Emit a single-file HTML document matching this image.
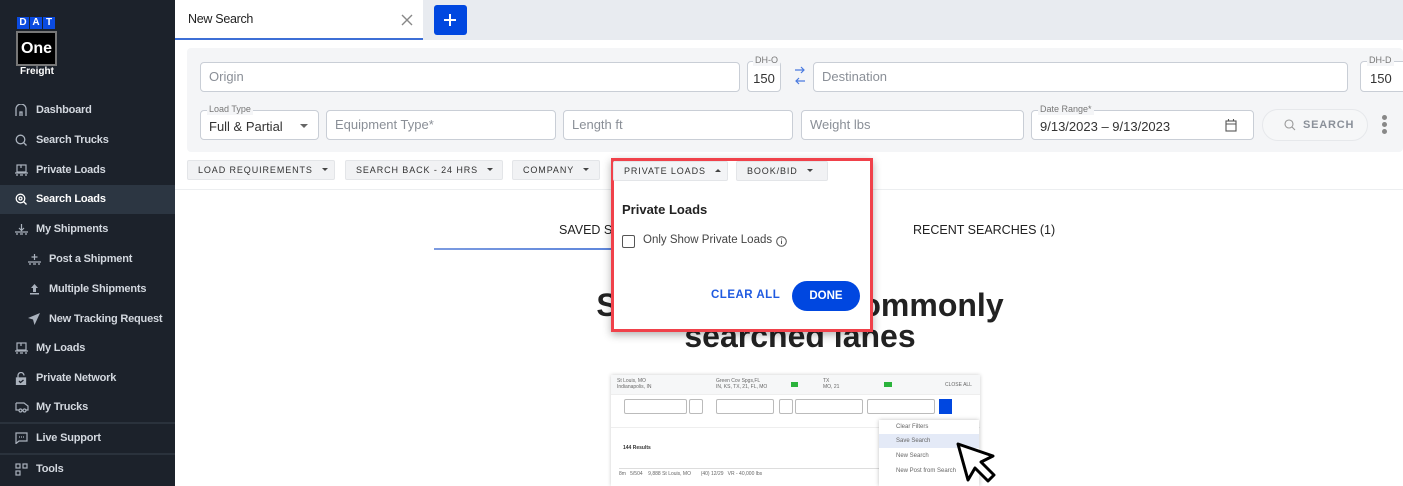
<!DOCTYPE html>
<html><head><meta charset="utf-8">
<style>
*{box-sizing:border-box;margin:0;padding:0}
body{width:1403px;height:486px;overflow:hidden;font-family:"Liberation Sans",sans-serif;background:#fff;position:relative;color:#222}
.abs{position:absolute}
#side{left:0;top:0;width:175px;height:486px;background:#1c222b}
.nav{position:absolute;left:0;width:175px;height:29px;color:#d3d8df;font-weight:bold;font-size:11px;line-height:29px;letter-spacing:-0.2px}
.nav svg{position:absolute;left:15px;top:8px}
.nav.sub svg{left:28px}
.nav span{position:absolute;left:36px}
.nav.sub span{left:49px}
.hl{background:#2c3642;color:#fff}
.div{position:absolute;left:0;width:175px;height:2px;background:#2a323c}
.inp{position:absolute;background:#fff;border:1px solid #c9ced6;border-radius:4px;font-size:13px;color:#8a8f97;padding-left:8px;line-height:28px;height:30px;white-space:nowrap}
.lab{position:absolute;font-size:9px;color:#777;background:#f4f5f7;padding:0 2px;top:-7px;left:6px;line-height:11px;white-space:nowrap}
.val{color:#333}
.chip{position:absolute;top:160px;height:20px;background:#f1f2f4;border:1px solid #e3e5e8;border-radius:2px;font-size:9px;letter-spacing:0.9px;color:#333;line-height:18px;padding-left:10px;white-space:nowrap}
.ar{display:inline-block;margin-left:9px;vertical-align:middle;border-left:3px solid transparent;border-right:3px solid transparent;border-top:3px solid #444;position:relative;top:-1px}
.ar.up{border-top:0;border-bottom:3px solid #444}
.t{position:absolute;font-size:5px;color:#666;white-space:nowrap}
</style></head><body>
<div id="side" class="abs">
  <div class="abs" style="left:17px;top:17px;width:38px;height:12px;display:flex;gap:1px">
    <div style="flex:1;background:#0b4be0;color:#fff;font-weight:bold;font-size:10px;text-align:center;line-height:12px">D</div>
    <div style="flex:1;background:#0b4be0;color:#fff;font-weight:bold;font-size:10px;text-align:center;line-height:12px">A</div>
    <div style="flex:1;background:#0b4be0;color:#fff;font-weight:bold;font-size:10px;text-align:center;line-height:12px">T</div>
  </div>
  <div class="abs" style="left:16px;top:31px;width:41px;height:35px;background:#000;border:2px solid #777;color:#fff;font-weight:bold;font-size:16px;text-align:center;line-height:31px">One</div>
  <div class="abs" style="left:16px;top:66px;width:42px;text-align:center;color:#fff;font-weight:bold;font-size:10px">Freight</div>

  <div class="nav" style="top:96px"><svg width="12" height="12" viewBox="0 0 12 12" fill="none" stroke="#aab2bd" stroke-width="1.3"><path d="M1 12V5a5 5 0 0 1 10 0v7M5 12V8h2v4"/></svg><span>Dashboard</span></div>
  <div class="nav" style="top:126px"><svg width="12" height="12" viewBox="0 0 12 12" fill="none" stroke="#aab2bd" stroke-width="1.3"><circle cx="5.5" cy="5.5" r="4.3"/><path d="M8.5 8.5L11.5 11.5"/></svg><span>Search Trucks</span></div>
  <div class="nav" style="top:156px"><svg width="13" height="12" viewBox="0 0 13 12" fill="none" stroke="#aab2bd" stroke-width="1.2"><rect x="2" y="1" width="9" height="7"/><path d="M0 9h13M1 11h2M5 11h3M10 11h2M6 1v3"/></svg><span>Private Loads</span></div>
  <div class="nav hl" style="top:185px"><svg width="12" height="12" viewBox="0 0 12 12" fill="none" stroke="#fff" stroke-width="1.3"><circle cx="5.5" cy="5.5" r="4.3"/><circle cx="5.5" cy="5.5" r="1.5"/><path d="M8.5 8.5L11.5 11.5"/></svg><span>Search Loads</span></div>
  <div class="nav" style="top:215px"><svg width="13" height="12" viewBox="0 0 13 12" fill="none" stroke="#aab2bd" stroke-width="1.2"><path d="M6.5 1v6M4 5l2.5 2.5L9 5M0 9h13M1 11h2M5 11h3M10 11h2"/></svg><span>My Shipments</span></div>
  <div class="nav sub" style="top:245px"><svg width="13" height="12" viewBox="0 0 13 12" fill="none" stroke="#aab2bd" stroke-width="1.2"><path d="M6.5 1v6M3.5 4h6M0 9h13M1 11h2M5 11h3M10 11h2"/></svg><span>Post a Shipment</span></div>
  <div class="nav sub" style="top:275px"><svg width="13" height="12" viewBox="0 0 13 12" fill="#aab2bd"><path d="M6.5 1L10 5H8v4H5V5H3z"/><rect x="2" y="10" width="9" height="1.5"/></svg><span>Multiple Shipments</span></div>
  <div class="nav sub" style="top:305px"><svg width="13" height="12" viewBox="0 0 13 12" fill="#aab2bd"><path d="M12 0L0 5l5 1.5L6.5 12z"/></svg><span>New Tracking Request</span></div>
  <div class="nav" style="top:334px"><svg width="13" height="12" viewBox="0 0 13 12" fill="none" stroke="#aab2bd" stroke-width="1.2"><rect x="2" y="1" width="9" height="7"/><path d="M0 9h13M1 11h2M5 11h3M10 11h2M6 1v3"/></svg><span>My Loads</span></div>
  <div class="nav" style="top:364px"><svg width="12" height="13" viewBox="0 0 12 13" fill="none" stroke="#aab2bd" stroke-width="1.3"><path d="M3 6V3.5a3 3 0 0 1 6 0"/><rect x="1.5" y="6" width="9" height="6.5" fill="#aab2bd"/><path d="M4 9l1.5 1.5L8.5 8" stroke="#1c222b"/></svg><span>Private Network</span></div>
  <div class="nav" style="top:393px"><svg width="14" height="12" viewBox="0 0 14 12" fill="none" stroke="#aab2bd" stroke-width="1.2"><path d="M1 2h8l4 3v4h-2M4 9H1V2"/><circle cx="5.5" cy="9.5" r="1.5"/><circle cx="9.5" cy="9.5" r="1.5"/></svg><span>My Trucks</span></div>
  <div class="div" style="top:422px"></div>
  <div class="nav" style="top:424px"><svg width="13" height="12" viewBox="0 0 13 12" fill="none" stroke="#aab2bd" stroke-width="1.2"><path d="M1 1h11v8H4l-3 2.5z"/><path d="M4 5h1M6 5h1M8 5h1"/></svg><span>Live Support</span></div>
  <div class="div" style="top:453px"></div>
  <div class="nav" style="top:455px"><svg width="13" height="13" viewBox="0 0 13 13" fill="none" stroke="#aab2bd" stroke-width="1.2"><rect x="1" y="1" width="4" height="4"/><rect x="8" y="1" width="4" height="4"/><rect x="1" y="8" width="4" height="4"/></svg><span>Tools</span></div>
</div>

<!-- tab bar -->
<div class="abs" style="left:175px;top:0;width:1228px;height:40px;background:#e8ebf0"></div>
<div class="abs" style="left:175px;top:0;width:248px;height:40px;background:#fff;border-bottom:2px solid #3d6fd6"></div>
<div class="abs" style="left:188px;top:12px;font-size:12.5px;color:#222;letter-spacing:-0.3px">New Search</div>
<svg class="abs" style="left:400px;top:13px" width="14" height="14" viewBox="0 0 14 14" stroke="#888" stroke-width="1.4"><path d="M2 2l10 10M12 2L2 12"/></svg>
<div class="abs" style="left:434px;top:5px;width:33px;height:30px;background:#0047e0;border-radius:3px"></div>
<svg class="abs" style="left:443px;top:13px" width="14" height="14" viewBox="0 0 14 14" stroke="#fff" stroke-width="2"><path d="M7 1v12M1 7h12"/></svg>

<!-- search panel -->
<div class="abs" style="left:187px;top:48px;width:1216px;height:104px;background:#f4f5f7;border-radius:4px"></div>
<div class="inp" style="left:200px;top:62px;width:540px">Origin</div>
<div class="inp" style="left:747px;top:61px;width:34px;height:31px;padding:0;text-align:center;line-height:33px"><span class="lab" style="left:5px;font-size:9px">DH-O</span><span class="val">150</span></div>
<svg class="abs" style="left:794px;top:65px" width="12" height="22" viewBox="0 0 12 22" fill="none" stroke="#4a7be0" stroke-width="1.2"><path d="M1 5h9M7 2l3 3-3 3M11 16H2M5 13l-3 3 3 3"/></svg>
<div class="inp" style="left:813px;top:62px;width:535px">Destination</div>
<div class="inp" style="left:1360px;top:61px;width:50px;height:31px;padding:0 0 0 9px;line-height:33px"><span class="lab" style="left:6px">DH-D</span><span class="val">150</span></div>

<div class="inp" style="left:200px;top:110px;width:119px;line-height:31px"><span class="lab">Load Type</span><span class="val">Full &amp; Partial</span><span style="position:absolute;right:10px;top:13px;border-left:4px solid transparent;border-right:4px solid transparent;border-top:4px solid #666"></span></div>
<div class="inp" style="left:326px;top:110px;width:230px">Equipment Type*</div>
<div class="inp" style="left:563px;top:110px;width:230px">Length ft</div>
<div class="inp" style="left:801px;top:110px;width:223px">Weight lbs</div>
<div class="inp" style="left:1031px;top:110px;width:223px;line-height:31px"><span class="lab">Date Range*</span><span class="val">9/13/2023 – 9/13/2023</span>
<svg style="position:absolute;right:16px;top:8px" width="12" height="13" viewBox="0 0 12 13" fill="none" stroke="#555" stroke-width="1.1"><rect x="1" y="2" width="10" height="10"/><path d="M1 5h10M3.5 0v2M8.5 0v2"/></svg></div>
<div class="abs" style="left:1262px;top:109px;width:106px;height:32px;border:1px solid #e6e8eb;border-radius:16px;background:#f6f7f8;font-size:11px;font-weight:bold;color:#8a9099;letter-spacing:0.8px;line-height:30px;padding-left:40px">SEARCH</div>
<svg class="abs" style="left:1284px;top:119px" width="12" height="12" viewBox="0 0 12 12" fill="none" stroke="#999" stroke-width="1.1"><circle cx="5" cy="5" r="4"/><path d="M8 8l3 3"/></svg>
<div class="abs" style="left:1382px;top:115px;width:5px;height:5px;border-radius:50%;background:#888"></div>
<div class="abs" style="left:1382px;top:122px;width:5px;height:5px;border-radius:50%;background:#888"></div>
<div class="abs" style="left:1382px;top:129px;width:5px;height:5px;border-radius:50%;background:#888"></div>

<!-- chips -->
<div class="chip" style="left:187px;width:148px">LOAD REQUIREMENTS<span class="ar"></span></div>
<div class="chip" style="left:345px;width:158px">SEARCH BACK - 24 HRS<span class="ar"></span></div>
<div class="chip" style="left:512px;width:88px">COMPANY<span class="ar"></span></div>
<div class="abs" style="left:175px;top:189px;width:1228px;height:1px;background:#eceef0"></div>

<!-- saved/recent tabs -->
<div class="abs" style="left:559px;top:223px;font-size:12.5px;color:#222">SAVED SEARCHES</div>
<div class="abs" style="left:434px;top:248px;width:370px;height:2px;background:linear-gradient(90deg,#7c9be0,#3d6fd6)"></div>
<div class="abs" style="left:913px;top:223px;font-size:12.5px;color:#222">RECENT SEARCHES (1)</div>

<div class="abs" style="left:450px;top:290px;width:700px;text-align:center;font-size:32px;font-weight:bold;line-height:31px;color:#222">Save your most commonly<br>searched lanes</div>

<!-- thumbnail -->
<div class="abs" style="left:611px;top:375px;width:369px;height:111px;background:#fff;box-shadow:0 0 4px rgba(0,0,0,.2);overflow:hidden">
  <div class="abs" style="left:0;top:0;width:369px;height:20px;background:#f6f7f8;border-bottom:1px solid #eee"></div>
  <div class="t" style="left:6px;top:3px">St Louis, MO<br>Indianapolis, IN</div>
  <div class="t" style="left:105px;top:3px">Green Cov Spgs,FL<br>IN, KS, TX, 21, FL, MO</div>
  <div class="abs" style="left:180px;top:7px;width:7px;height:5px;background:#2bb33c"></div>
  <div class="t" style="left:212px;top:3px">TX<br>MO, 21</div>
  <div class="abs" style="left:273px;top:7px;width:8px;height:5px;background:#2bb33c"></div>
  <div class="t" style="left:334px;top:7px">CLOSE ALL</div>
  <div class="abs" style="left:13px;top:24px;width:63px;height:15px;border:1px solid #bbb;border-radius:2px"></div>
  <div class="abs" style="left:78px;top:24px;width:14px;height:15px;border:1px solid #bbb;border-radius:2px"></div>
  <div class="abs" style="left:105px;top:24px;width:58px;height:15px;border:1px solid #bbb;border-radius:2px"></div>
  <div class="abs" style="left:168px;top:24px;width:14px;height:15px;border:1px solid #bbb;border-radius:2px"></div>
  <div class="abs" style="left:184px;top:24px;width:68px;height:15px;border:1px solid #bbb;border-radius:2px"></div>
  <div class="abs" style="left:256px;top:24px;width:68px;height:15px;border:1px solid #bbb;border-radius:2px"></div>
  <div class="abs" style="left:328px;top:24px;width:13px;height:15px;background:#0047e0"></div>
  <div class="abs" style="left:0;top:52px;width:369px;height:1px;background:#eee"></div>
  <div class="t" style="left:12px;top:70px;font-weight:bold;color:#333">144 Results</div>
  <div class="abs" style="left:8px;top:93px;width:260px;height:1px;background:#ddd"></div>
  <div class="t" style="left:8px;top:96px">8m &nbsp; 5/504 &nbsp;&nbsp; 9,888 St Louis, MO &nbsp;&nbsp;&nbsp;&nbsp;&nbsp; (40) 12/29 &nbsp; VR - 40,000 lbs</div>
  <div class="abs" style="left:268px;top:45px;width:100px;height:66px;background:#fff;box-shadow:0 0 4px rgba(0,0,0,.25)"></div>
  <div class="abs" style="left:268px;top:59px;width:100px;height:14px;background:#e4eaf7"></div>
  <div class="t" style="left:285px;top:49px;font-size:6px">Clear Filters</div>
  <div class="t" style="left:285px;top:63px;font-size:6px">Save Search</div>
  <div class="t" style="left:285px;top:78px;font-size:6px">New Search</div>
  <div class="t" style="left:285px;top:93px;font-size:6px">New Post from Search</div>
</div>
<svg class="abs" style="left:955px;top:441px" width="45" height="42" viewBox="0 0 45 42"><path d="M3 3l10 36 7-12 13 13 6-6-13-13 12-6z" fill="#fff" stroke="#000" stroke-width="3" stroke-linejoin="round"/></svg>

<!-- popup -->
<div class="abs" style="left:611px;top:158px;width:262px;height:174px;background:#fff;border:3px solid #f0414a;box-shadow:0 3px 8px rgba(0,0,0,.3)"></div>
<div class="chip" style="left:613px;width:115px;top:161px;background:#f3f4f6">PRIVATE LOADS<span class="ar up"></span></div>
<div class="chip" style="left:736px;width:92px;top:161px">BOOK/BID<span class="ar"></span></div>
<div class="abs" style="left:622px;top:202px;font-size:13px;font-weight:bold;color:#222">Private Loads</div>
<div class="abs" style="left:622px;top:235px;width:13px;height:13px;border:1.5px solid #555;border-radius:2px"></div>
<div class="abs" style="left:643px;top:234px;font-size:11.5px;color:#444">Only Show Private Loads</div>
<svg class="abs" style="left:776px;top:236px" width="11" height="11" viewBox="0 0 11 11" fill="none" stroke="#555" stroke-width="1"><circle cx="5.5" cy="5.5" r="4.8"/><path d="M5.5 4.5v3.5M5.5 2.5v1"/></svg>
<div class="abs" style="left:711px;top:289px;font-size:11.5px;font-weight:bold;color:#1f5ae0;letter-spacing:0.5px">CLEAR ALL</div>
<div class="abs" style="left:792px;top:281px;width:68px;height:30px;background:#0047e0;border-radius:15px;color:#fff;font-size:11.5px;font-weight:bold;text-align:center;line-height:30px">DONE</div>
</body></html>
